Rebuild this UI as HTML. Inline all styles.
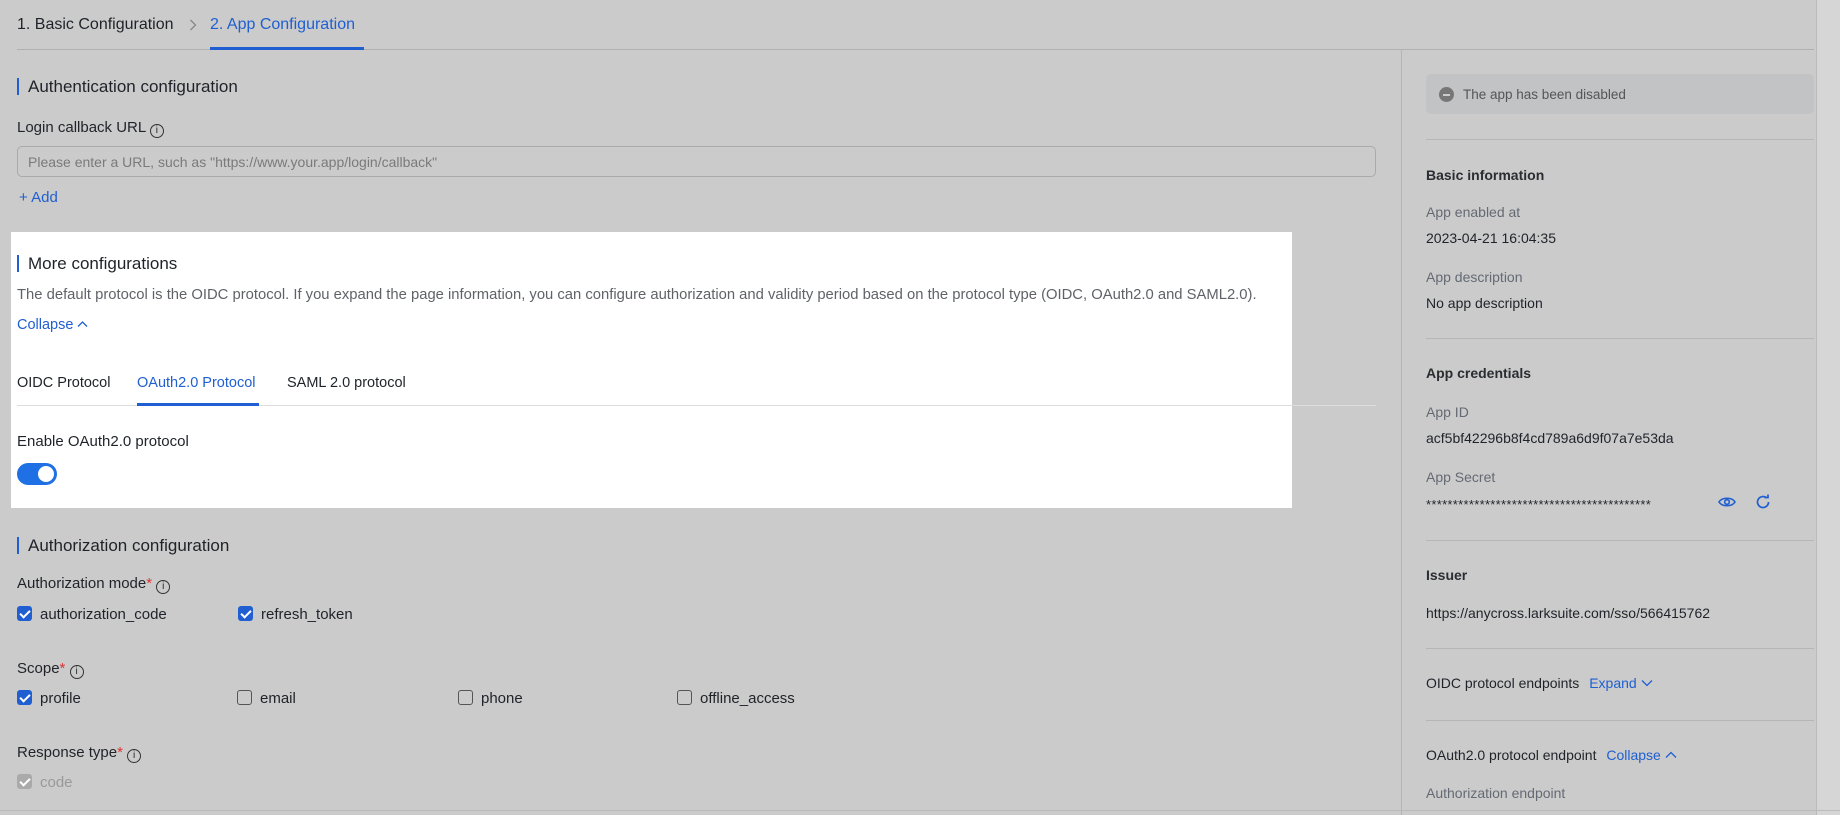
<!DOCTYPE html>
<html><head><meta charset="utf-8"><style>
*{box-sizing:border-box;margin:0;padding:0}
body{width:1840px;height:815px;overflow:hidden;background:#cbcbcb;font-family:"Liberation Sans",sans-serif;color:#1f2329;position:relative}
.a{position:absolute;white-space:nowrap}
.blue{color:#1f5fd1}
.g{color:#5f6368}
.h{font-size:17px;padding-left:9px;border-left:2px solid #1f5fd1;line-height:17px}
.cb{display:inline-block;width:15px;height:15px;border-radius:3px;vertical-align:-2px;margin-right:8px;position:relative}
.on{background:#1f5fd1}
.on::after,.dis::after{content:"";position:absolute;left:5px;top:2px;width:4px;height:8px;border:solid #fff;border-width:0 2px 2px 0;transform:rotate(45deg)}
.off{border:1px solid #555}
.ln{position:absolute;height:1px;background:#b5b5b5}
.r{font-size:14px}
.rg{color:#646a73;font-size:14px}
.rb{font-size:14px;font-weight:bold;color:#2a2d31}
.i{display:inline-block;width:14px;height:14px;border:1px solid #333;border-radius:50%;font-size:10px;text-align:center;line-height:12px;vertical-align:-1px}
</style></head><body>
<div class="a" style="left:17px;top:16px;font-size:16px">1. Basic Configuration</div>
<svg class="a" style="left:189px;top:19px" width="8" height="12" viewBox="0 0 8 12"><path d="M1.5 1L6.5 6L1.5 11" fill="none" stroke="#888" stroke-width="1.3"/></svg>
<div class="a blue" style="left:210px;top:16px;font-size:16px">2. App Configuration</div>
<div class="ln" style="left:17px;top:49px;width:1797px;background:#b0b0b0"></div>
<div class="a" style="left:210px;top:47px;width:154px;height:3px;background:#1f5fd1"></div>
<div class="a" style="left:1401px;top:49px;width:1px;height:766px;background:#b5b5b5"></div>
<div class="a" style="left:1816px;top:0;width:24px;height:815px;background:#d6d6d6;border-left:1px solid #bbb"></div>

<div class="a h" style="left:17px;top:78px">Authentication configuration</div>
<div class="a" style="left:17px;top:119px;font-size:15px">Login callback URL <span class="i">i</span></div>
<div class="a" style="left:17px;top:146px;width:1359px;height:31px;border:1px solid #aaa;border-radius:5px;padding:7px 10px;font-size:14px;color:#7a7a7a">Please enter a URL, such as "https://www.your.app/login/callback"</div>
<div class="a blue" style="left:19px;top:189px;font-size:15px">+ Add</div>

<div class="a" style="left:11px;top:232px;width:1281px;height:276px;background:#fff"></div>
<div class="a h" style="left:17px;top:255px">More configurations</div>
<div class="a g" style="left:17px;top:287px;font-size:14.8px">The default protocol is the OIDC protocol. If you expand the page information, you can configure authorization and validity period based on the protocol type (OIDC, OAuth2.0 and SAML2.0).</div>
<div class="a blue" style="left:17px;top:317px;font-size:14.5px">Collapse <svg width="11" height="8" viewBox="0 0 11 8" style="vertical-align:1px"><path d="M1 6.5L5.5 2L10 6.5" fill="none" stroke="#1f5fd1" stroke-width="1.3"/></svg></div>
<div class="a" style="left:17px;top:375px;font-size:14.5px">OIDC Protocol</div>
<div class="a blue" style="left:137px;top:375px;font-size:14.5px">OAuth2.0 Protocol</div>
<div class="a" style="left:287px;top:375px;font-size:14.5px">SAML 2.0 protocol</div>
<div class="ln" style="left:17px;top:405px;width:1359px;background:#ddd"></div>
<div class="a" style="left:137px;top:403px;width:122px;height:3px;background:#1f5fd1"></div>
<div class="a" style="left:17px;top:433px;font-size:15px">Enable OAuth2.0 protocol</div>
<div class="a" style="left:17px;top:463px;width:40px;height:22px;border-radius:11px;background:#1f6fe5"><div style="position:absolute;right:3px;top:3px;width:16px;height:16px;border-radius:50%;background:#fff"></div></div>

<div class="a h" style="left:17px;top:537px">Authorization configuration</div>
<div class="a" style="left:17px;top:575px;font-size:15px">Authorization mode<span style="color:#d33">*</span> <span class="i">i</span></div>
<div class="a" style="left:17px;top:606px;font-size:15px"><span class="cb on"></span>authorization_code</div>
<div class="a" style="left:238px;top:606px;font-size:15px"><span class="cb on"></span>refresh_token</div>
<div class="a" style="left:17px;top:660px;font-size:15px">Scope<span style="color:#d33">*</span> <span class="i">i</span></div>
<div class="a" style="left:17px;top:690px;font-size:15px"><span class="cb on"></span>profile</div>
<div class="a" style="left:237px;top:690px;font-size:15px"><span class="cb off"></span>email</div>
<div class="a" style="left:458px;top:690px;font-size:15px"><span class="cb off"></span>phone</div>
<div class="a" style="left:677px;top:690px;font-size:15px"><span class="cb off"></span>offline_access</div>
<div class="a" style="left:17px;top:744px;font-size:15px">Response type<span style="color:#d33">*</span> <span class="i">i</span></div>
<div class="a" style="left:17px;top:774px;font-size:15px;color:#999"><span class="cb dis" style="background:#aaa"></span>code</div>
<div class="ln" style="left:0;top:810px;width:1840px;background:#bbb"></div>

<div class="a" style="left:1426px;top:74px;width:388px;height:40px;background:#c2c3c5;border-radius:5px"></div>
<div class="a" style="left:1439px;top:87px;width:15px;height:15px;border-radius:50%;background:#777"><div style="position:absolute;left:4px;top:7px;width:7px;height:1.5px;background:#ccc"></div></div>
<div class="a" style="left:1463px;top:87px;font-size:13.5px;color:#555">The app has been disabled</div>
<div class="ln" style="left:1426px;top:139px;width:388px"></div>
<div class="a rb" style="left:1426px;top:167px">Basic information</div>
<div class="a rg" style="left:1426px;top:204px">App enabled at</div>
<div class="a r" style="left:1426px;top:230px">2023-04-21 16:04:35</div>
<div class="a rg" style="left:1426px;top:269px">App description</div>
<div class="a r" style="left:1426px;top:295px">No app description</div>
<div class="ln" style="left:1426px;top:338px;width:388px"></div>
<div class="a rb" style="left:1426px;top:365px">App credentials</div>
<div class="a rg" style="left:1426px;top:404px">App ID</div>
<div class="a r" style="left:1426px;top:430px">acf5bf42296b8f4cd789a6d9f07a7e53da</div>
<div class="a rg" style="left:1426px;top:469px">App Secret</div>
<div class="a r" style="left:1426px;top:497px;font-size:13px;letter-spacing:0.3px">******************************************</div>
<svg class="a" style="left:1718px;top:495px" width="18" height="14" viewBox="0 0 18 14"><path d="M1 7C4 2 14 2 17 7C14 12 4 12 1 7Z" fill="none" stroke="#1f5fd1" stroke-width="1.6"/><circle cx="9" cy="7" r="2.3" fill="none" stroke="#1f5fd1" stroke-width="1.6"/></svg>
<svg class="a" style="left:1755px;top:494px" width="16" height="16" viewBox="0 0 16 16"><path d="M13.5 8A5.5 5.5 0 1 1 11.5 3.8" fill="none" stroke="#1f5fd1" stroke-width="1.7"/><path d="M9.5 3.5H13V0.5" fill="none" stroke="#1f5fd1" stroke-width="1.7"/></svg>
<div class="ln" style="left:1426px;top:540px;width:388px"></div>
<div class="a rb" style="left:1426px;top:567px">Issuer</div>
<div class="a r" style="left:1426px;top:605px">https://anycross.larksuite.com/sso/566415762</div>
<div class="ln" style="left:1426px;top:648px;width:388px"></div>
<div class="a r" style="left:1426px;top:675px">OIDC protocol endpoints <span class="blue" style="margin-left:6px">Expand <svg width="12" height="8" viewBox="0 0 12 8" style="vertical-align:1px"><path d="M1 1.5L6 6.5L11 1.5" fill="none" stroke="#1f5fd1" stroke-width="1.3"/></svg></span></div>
<div class="ln" style="left:1426px;top:720px;width:388px"></div>
<div class="a r" style="left:1426px;top:747px">OAuth2.0 protocol endpoint <span class="blue" style="margin-left:6px">Collapse <svg width="12" height="8" viewBox="0 0 12 8" style="vertical-align:1px"><path d="M1 6.5L6 1.5L11 6.5" fill="none" stroke="#1f5fd1" stroke-width="1.3"/></svg></span></div>
<div class="a rg" style="left:1426px;top:785px">Authorization endpoint</div>
</body></html>
